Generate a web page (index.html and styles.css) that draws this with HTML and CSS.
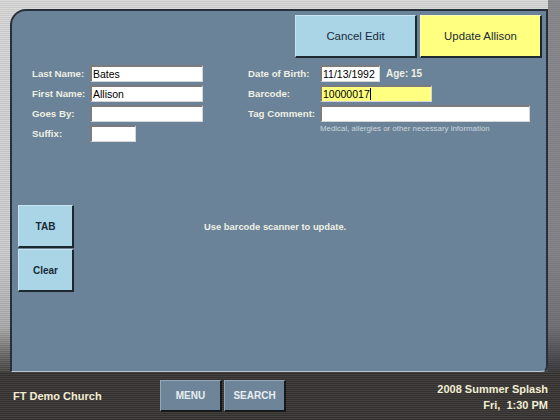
FILE: index.html
```html
<!DOCTYPE html>
<html lang="en">
<head>
  <meta charset="UTF-8" />
  <meta name="viewport" content="width=device-width, initial-scale=1.0" />
  <title>Check-In - Edit Child</title>
  <link rel="stylesheet" href="styles.css">
</head>
<body>

  <div class="screen">
    <!-- Main edit panel -->
    <main class="panel">
      <div class="top-actions">
        <button class="big-btn cancel-btn">Cancel Edit</button>
        <button class="big-btn update-btn">Update Allison</button>
      </div>

      <div class="form">
        <div class="field-group left-group">
          <label class="label">Last Name:</label>
          <div class="field wide">Bates</div>

          <label class="label">First Name:</label>
          <div class="field wide">Allison</div>

          <label class="label">Goes By:</label>
          <div class="field wide"></div>

          <label class="label">Suffix:</label>
          <div class="field short"></div>
        </div>

        <div class="field-group right-group">
          <label class="label">Date of Birth:</label>
          <div class="inline-row">
            <div class="field date">11/13/1992</div>
            <span class="age">Age: 15</span>
          </div>

          <label class="label">Barcode:</label>
          <div class="field barcode">10000017<span class="caret"></span></div>

          <label class="label">Tag Comment:</label>
          <div class="field comment"></div>

          <span></span>
          <div class="hint">Medical, allergies or other necessary information</div>
        </div>
      </div>

      <div class="middle">
        <div class="side-buttons">
          <button class="side-btn">TAB</button>
          <button class="side-btn">Clear</button>
        </div>
        <div class="message">Use barcode scanner to update.</div>
      </div>
    </main>

    <!-- Status bar along the bottom -->
    <footer class="status-bar">
      <div class="church-name">FT Demo Church</div>
      <div class="nav-buttons">
        <button class="nav-btn">MENU</button>
        <button class="nav-btn">SEARCH</button>
      </div>
      <div class="event-info">
        <div>2008 Summer Splash</div>
        <div class="clock">Fri,  1:30 PM</div>
      </div>
    </footer>
  </div>

</body>
</html>
```

FILE: styles.css
```css
:root {
  --panel-color: #6b8398;
  --panel-edge: #26303a;
  --label-color: #eef0e4;
  --button-blue: #a9d5e7;
  --button-yellow: #ffff80;
  --button-shadow: #1d2730;
  --text-dark: #1a2a38;
  --base-font: "Liberation Sans", Arial, sans-serif;
}

* {
  box-sizing: border-box;
  margin: 0;
  padding: 0;
}

body {
  font-family: var(--base-font);
  background: #3a3836;
}

/* Brushed metal frame around the panel */
.screen {
  width: 560px;
  height: 420px;
  display: flex;
  flex-direction: column;
  background:
    linear-gradient(to right, transparent 548px, rgba(40, 44, 50, 0.45) 548px),
    repeating-linear-gradient(to bottom, rgba(255, 255, 255, 0.08) 0 1px, rgba(0, 0, 0, 0.06) 1px 2px),
    linear-gradient(to bottom, #d6d6d6 0%, #cbcbcb 60%, #a8a8a8 78%, #5a5856 86%, #3a3836 90%);
}

.panel {
  height: 363px;
  margin: 9px 12px 0 10px;
  background: var(--panel-color);
  border-top: 2px solid var(--panel-edge);
  border-left: 2px solid var(--panel-edge);
  border-right: 2px solid var(--panel-edge);
  border-bottom: 1px solid #b9c7d3;
  border-radius: 16px 0 6px 0;
}

/* Top right action buttons */
.top-actions {
  display: flex;
  justify-content: flex-end;
  gap: 3px;
  padding: 4px 4px 0 0;
}

.big-btn {
  width: 122px;
  height: 43px;
  font-family: var(--base-font);
  font-size: 11.4px;
  color: var(--text-dark);
  border: none;
  border-top: 1px solid rgba(255, 255, 255, 0.4);
  border-left: 1px solid rgba(255, 255, 255, 0.4);
  border-right: 2px solid var(--button-shadow);
  border-bottom: 2px solid var(--button-shadow);
  cursor: pointer;
}

.cancel-btn {
  background: var(--button-blue);
}

.update-btn {
  background: var(--button-yellow);
}

/* Form fields */
.form {
  display: flex;
  margin-top: 7px;
  padding-left: 20px;
}

.field-group {
  display: grid;
  row-gap: 3px;
  align-items: center;
  align-content: start;
}

.left-group {
  grid-template-columns: 58px auto;
}

.right-group {
  grid-template-columns: 72px auto;
  margin-left: 45px;
}

.label {
  font-size: 9.7px;
  font-weight: bold;
  color: var(--label-color);
  line-height: 17px;
}

.field {
  height: 17px;
  background: #fff;
  border-top: 2px solid #7c7c7c;
  border-left: 2px solid #7c7c7c;
  border-right: 1px solid #d6d6d6;
  border-bottom: 1px solid #d6d6d6;
  padding: 0 1px;
  font-size: 10.5px;
  line-height: 14px;
  color: #000;
}

.field.wide { width: 113px; }
.field.short { width: 46px; }
.field.date { width: 60px; }
.field.comment { width: 210px; }

.field.barcode {
  width: 112px;
  background: var(--button-yellow);
}

.caret {
  display: inline-block;
  width: 1px;
  height: 12px;
  background: #000;
  vertical-align: -2px;
}

.inline-row {
  display: flex;
  align-items: center;
}

.age {
  margin-left: 6px;
  font-size: 10px;
  font-weight: bold;
  color: var(--label-color);
}

.hint {
  font-size: 7.9px;
  color: #cdd6de;
  line-height: 10px;
  margin-top: -1px;
}

/* Middle area with side buttons and the scanner message */
.middle {
  display: flex;
  margin-top: 63px;
  padding-left: 6px;
}

.side-buttons {
  display: flex;
  flex-direction: column;
  gap: 1px;
}

.side-btn {
  width: 56px;
  height: 43px;
  background: var(--button-blue);
  font-family: var(--base-font);
  font-size: 10px;
  font-weight: bold;
  color: var(--text-dark);
  border: none;
  border-top: 1px solid rgba(255, 255, 255, 0.4);
  border-left: 1px solid rgba(255, 255, 255, 0.4);
  border-right: 2px solid var(--button-shadow);
  border-bottom: 2px solid var(--button-shadow);
  cursor: pointer;
}

.message {
  padding-left: 130px;
  line-height: 43px;
  font-size: 9.4px;
  font-weight: bold;
  color: var(--label-color);
}

/* Bottom status bar */
.status-bar {
  flex: 1;
  display: flex;
  align-items: flex-start;
  padding: 8px 12px 0 13px;
  background: repeating-linear-gradient(to bottom, #44413f 0 1px, #32302e 1px 2px);
  color: #f2eed4;
  font-size: 11px;
  font-weight: bold;
}

.church-name {
  width: 147px;
  line-height: 32px;
}

.nav-buttons {
  display: flex;
  gap: 2px;
}

.nav-btn {
  width: 62px;
  height: 32px;
  background: #6e8499;
  font-family: var(--base-font);
  font-size: 10px;
  font-weight: bold;
  color: #e8eef2;
  border: none;
  border-top: 1px solid #97a8b8;
  border-left: 1px solid #97a8b8;
  border-right: 2px solid #16191c;
  border-bottom: 2px solid #16191c;
  cursor: pointer;
}

.event-info {
  flex: 1;
  text-align: right;
  line-height: 16px;
  padding-top: 1px;
}

.clock {
  white-space: pre;
}
```
